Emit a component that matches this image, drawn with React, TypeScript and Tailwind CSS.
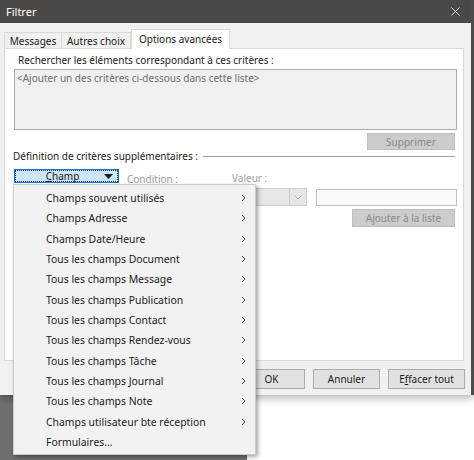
import { X } from 'lucide-react';

const menuItems: { label: string; sub: boolean }[] = [
  { label: 'Champs souvent utilisés', sub: true },
  { label: 'Champs Adresse', sub: true },
  { label: 'Champs Date/Heure', sub: true },
  { label: 'Tous les champs Document', sub: true },
  { label: 'Tous les champs Message', sub: true },
  { label: 'Tous les champs Publication', sub: true },
  { label: 'Tous les champs Contact', sub: true },
  { label: 'Tous les champs Rendez-vous', sub: true },
  { label: 'Tous les champs Tâche', sub: true },
  { label: 'Tous les champs Journal', sub: true },
  { label: 'Tous les champs Note', sub: true },
  { label: 'Champs utilisateur bte réception', sub: true },
  { label: 'Formulaires...', sub: false },
];

function Chevron() {
  return (
    <svg width="5" height="8" viewBox="0 0 5 8" className="text-[#444]">
      <path d="M1 1l3 3-3 3" fill="none" stroke="currentColor" strokeWidth="1" />
    </svg>
  );
}

function FieldMenu() {
  return (
    <div className="absolute z-20 left-[13px] top-[184px] w-[243px] h-[271px] bg-[#f2f2f2] border border-[#cccccc] shadow-[2px_2px_4px_rgba(0,0,0,0.35)] pt-[3px]">
      {menuItems.map((item) => (
        <div key={item.label} className="flex items-center h-[20.33px] pl-[32px] pr-[9px] text-[10.4px] text-[#1a1a1a]">
          <span className="flex-1 whitespace-nowrap">{item.label}</span>
          {item.sub && <Chevron />}
        </div>
      ))}
    </div>
  );
}

function DisabledButton({ children, className }: { children: React.ReactNode; className: string }) {
  return (
    <div className={`flex items-center justify-center bg-[#cccccc] border border-[#bfbfbf] text-[#8a8a8a] ${className}`}>
      {children}
    </div>
  );
}

function Button({ children, className }: { children: React.ReactNode; className: string }) {
  return (
    <div className={`flex items-center justify-center bg-[#e1e1e1] border border-[#adadad] text-[#1a1a1a] ${className}`}>
      {children}
    </div>
  );
}

export default function App() {
  return (
    <div className="relative w-[474px] h-[460px] overflow-hidden bg-white text-[10px] leading-none font-['Noto_Sans','Open_Sans',sans-serif]">
      {/* dialog */}
      <div className="flex flex-col h-[395px] border-r-[3px] border-[#4e4c4a] shadow-[0_3px_8px_rgba(0,0,0,0.3)] relative z-10">
        <div className="flex items-center h-[23px] bg-[#4b4947] pl-[6px] pr-[8px] text-white text-[11px]">
          <span className="flex-1">Filtrer</span>
          <X size={15} strokeWidth={1.3} />
        </div>
        <div className="flex-1 bg-[#f0f0f0] pl-[4px] pr-[6px]">
          {/* tabs */}
          <div className="flex items-end h-[25px]">
            <div className="flex items-center justify-center w-[58px] h-[16px] border border-b-0 border-[#d9d9d9] bg-[#f0f0f0] text-[#1a1a1a]">Messages</div>
            <div className="flex items-center justify-center w-[69px] h-[16px] border border-b-0 border-l-0 border-[#d9d9d9] bg-[#f0f0f0] text-[#1a1a1a]">Autres choix</div>
            <div className="flex items-center justify-center w-[99px] h-[20px] pb-[2px] border border-b-0 border-[#d9d9d9] bg-white text-[#1a1a1a] -mb-px relative z-10">Options avancées</div>
          </div>
          {/* panel */}
          <div className="h-[313px] w-[460px] bg-white border border-[#d9d9d9] pl-[9px] pt-[5px]">
            <div className="pl-[4px] h-[12px] flex items-center text-[#1a1a1a]">Rechercher les éléments correspondant à ces critères :</div>
            <div className="mt-[3px] w-[443px] h-[61px] bg-[#f0f0f0] border border-[#abadb3] px-[2px] pt-[3px] text-[#6d6d6d]">
              &lt;Ajouter un des critères ci-dessous dans cette liste&gt;
            </div>
            <div className="flex justify-end w-[441px] mt-[3px]">
              <DisabledButton className="w-[88px] h-[17px]">Supprimer</DisabledButton>
            </div>
            <div className="flex items-center w-[442px] -ml-px h-[12px] text-[#1a1a1a]">
              <span>Définition de critères supplémentaires :</span>
              <div className="flex-1 ml-[5px] h-px bg-[#a0a0a0]" />
            </div>
            <div className="flex items-start mt-[7px] h-[15px]">
              <div className="flex items-center w-[105px] h-[14px] bg-[#cce4f7] border border-[#0078d7] outline-1 outline-dotted outline-[#333] -outline-offset-2 text-[#1a1a1a]">
                <span className="flex-1 text-center pl-[6px]"><span className="underline">C</span>hamp</span>
                <svg width="9" height="5" viewBox="0 0 9 5" className="mr-[5px]"><path d="M0 0h9L4.5 5z" fill="#1a1a1a" /></svg>
              </div>
              <span className="ml-[8px] w-[105px] mt-[6px] text-[#9a9a9a] leading-[9px]">Condition :</span>
              <span className="mt-[5px] text-[#9a9a9a] leading-[9px]">Valeur :</span>
            </div>
            <div className="flex items-center mt-[4px] h-[18px]">
              <div className="flex w-[176px] h-[18px] ml-[117px] bg-[#e6e6e6] border border-[#cccccc]">
                <div className="flex-1" />
                <div className="w-[17px] flex items-center justify-center border-l border-[#cccccc]">
                  <svg width="8" height="5" viewBox="0 0 8 5"><path d="M0.5 0.5l3.5 3.5 3.5-3.5" fill="none" stroke="#b0b0b0" /></svg>
                </div>
              </div>
              <div className="ml-[9px] w-[141px] h-[17px] bg-[#f7f9fc] border border-[#b9c3cf]" />
            </div>
            <div className="flex justify-end w-[441px] mt-[3px]">
              <DisabledButton className="w-[103px] h-[18px]">Ajouter à la liste</DisabledButton>
            </div>
          </div>
          {/* bottom buttons */}
          <div className="flex justify-end gap-[8px] mt-[8px]">
            <Button className="w-[67px] h-[20px]">OK</Button>
            <Button className="w-[67px] h-[20px]">Annuler</Button>
            <Button className="w-[77px] h-[20px]">E<span className="underline">f</span>facer tout</Button>
          </div>
        </div>
      </div>
      {/* desktop below */}
      <div className="flex h-[65px]">
        <div className="w-[247px] bg-[#6f6f6f]" />
        <div className="flex-1 bg-white" />
      </div>
      <FieldMenu />
    </div>
  );
}
